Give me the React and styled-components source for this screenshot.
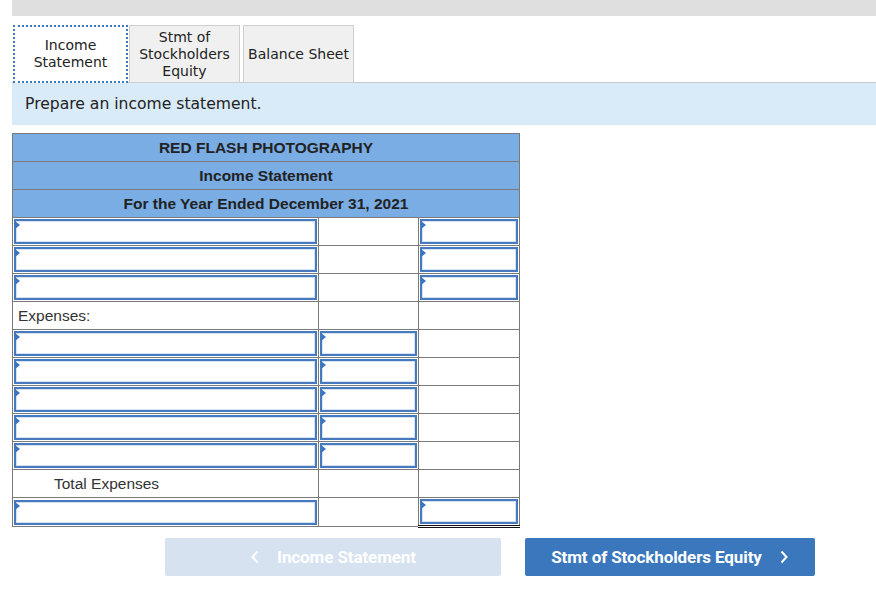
import React from 'react';
import styled, { createGlobalStyle } from 'styled-components';

const GlobalStyle = createGlobalStyle`
  body {
    margin: 0;
    background: #fff;
    font-family: "DejaVu Sans", Verdana, sans-serif;
  }
`;

const Page = styled.div`
  padding-left: 12px;
`;

const TopBar = styled.div`
  height: 16px;
  background: #dfdfdf;
`;

const Tabs = styled.div`
  display: flex;
  align-items: flex-end;
  margin-top: 9px;
  border-bottom: 1px solid #c8c8c8;
  padding-left: 1px;
`;

const Tab = styled.div`
  box-sizing: border-box;
  width: ${(p) => p.$w}px;
  height: 58px;
  margin-right: ${(p) => p.$mr || 0}px;
  margin-bottom: -1px;
  display: flex;
  align-items: center;
  justify-content: center;
  text-align: center;
  font-size: 14px;
  line-height: 17px;
  color: #222;
  background: ${(p) => (p.$active ? '#fff' : '#f0f0f0')};
  border: ${(p) => (p.$active ? '2px dotted #3a78c2' : '1px solid #cfcfcf')};
`;

const Banner = styled.div`
  height: 42px;
  background: #d9eaf8;
  display: flex;
  align-items: center;
  padding-left: 13px;
  font-size: 15.6px;
  color: #222;
`;

const Sheet = styled.table`
  margin-top: 8px;
  width: 507px;
  border-collapse: collapse;
  table-layout: fixed;
  font-family: "Liberation Sans", Arial, sans-serif;
  font-size: 15.5px;
  color: #333;
  tr {
    height: 28px;
  }
`;

const HeadCell = styled.th`
  padding: 0;
  background: #79ade4;
  border: 1px solid #7a7a7a;
  font-weight: bold;
  color: #222;
  text-align: center;
`;

const Cell = styled.td`
  padding: 1px;
  box-sizing: border-box;
  border: 1px solid #7a7a7a;
  border-top-color: ${(p) => (p.$rule ? '#111' : '#7a7a7a')};
  border-bottom: ${(p) => (p.$double ? '3px double #111' : '1px solid #7a7a7a')};
  vertical-align: middle;
`;

const Label = styled.span`
  display: block;
  padding-left: ${(p) => p.$indent || 4}px;
  line-height: 24px;
`;

const Field = styled.div`
  position: relative;
  box-sizing: border-box;
  height: 25px;
  border: 2px solid #4779be;
  box-shadow: inset 0 0 0 1px #d3e2f4;
  background: #fff;
  &::before {
    content: '';
    position: absolute;
    left: -1px;
    top: 0;
    border-left: 5px solid #3b74c0;
    border-top: 4px solid transparent;
    border-bottom: 4px solid transparent;
  }
`;

const Nav = styled.div`
  display: flex;
  gap: 24px;
  margin-top: 10px;
  padding-left: 153px;
`;

const NavButton = styled.button`
  box-sizing: border-box;
  width: ${(p) => p.$w}px;
  height: 38px;
  border: none;
  border-radius: 2px;
  display: flex;
  align-items: center;
  justify-content: center;
  gap: 17px;
  font-family: Roboto, "Liberation Sans", sans-serif;
  font-weight: 700;
  font-size: 17px;
  letter-spacing: -0.1px;
  color: #fff;
  background: ${(p) => (p.$disabled ? '#d6e2f0' : '#3a77bc')};
  padding: 0;
`;

const Chevron = ({ dir }) => (
  <svg width="10" height="14" viewBox="0 0 10 14" fill="none">
    <path
      d={dir === 'left' ? 'M7.5 1.5 L2.5 7 L7.5 12.5' : 'M2.5 1.5 L7.5 7 L2.5 12.5'}
      stroke="#fff"
      strokeWidth="2"
    />
  </svg>
);

// which columns hold an input: [name, amount1, amount2]
const rows = [
  { fields: [1, 0, 1] },
  { fields: [1, 0, 1] },
  { fields: [1, 0, 1] },
  { label: 'Expenses:' },
  { fields: [1, 1, 0] },
  { fields: [1, 1, 0] },
  { fields: [1, 1, 0] },
  { fields: [1, 1, 0] },
  { fields: [1, 1, 0] },
  { label: 'Total Expenses', indent: 40, rule: [0, 1, 0] },
  { fields: [1, 0, 1], rule: [0, 0, 1], double: [0, 0, 1] },
];

const App = () => {
  return (
    <Page>
      <GlobalStyle />
      <TopBar />
      <Tabs>
        <Tab $active $w={115} $mr={1}>Income<br />Statement</Tab>
        <Tab $w={111} $mr={3}>Stmt of<br />Stockholders<br />Equity</Tab>
        <Tab $w={111}>Balance Sheet</Tab>
      </Tabs>
      <Banner>Prepare an income statement.</Banner>
      <Sheet>
        <colgroup>
          <col style={{ width: 306 }} />
          <col style={{ width: 100 }} />
          <col style={{ width: 101 }} />
        </colgroup>
        <thead>
          <tr><HeadCell colSpan={3}>RED FLASH PHOTOGRAPHY</HeadCell></tr>
          <tr><HeadCell colSpan={3}>Income Statement</HeadCell></tr>
          <tr><HeadCell colSpan={3}>For the Year Ended December 31, 2021</HeadCell></tr>
        </thead>
        <tbody>
          {rows.map((row, i) => (
            <tr key={i}>
              {[0, 1, 2].map((c) => {
                const rule = row.rule && row.rule[c];
                const dbl = row.double && row.double[c];
                if (row.label && c === 0) {
                  return (
                    <Cell key={c}>
                      <Label $indent={row.indent}>{row.label}</Label>
                    </Cell>
                  );
                }
                return (
                  <Cell key={c} $rule={rule} $double={dbl}>
                    {row.fields && row.fields[c] ? <Field /> : null}
                  </Cell>
                );
              })}
            </tr>
          ))}
        </tbody>
      </Sheet>
      <Nav>
        <NavButton $disabled $w={336}>
          <Chevron dir="left" />
          Income Statement
        </NavButton>
        <NavButton $w={290}>
          Stmt of Stockholders Equity
          <Chevron dir="right" />
        </NavButton>
      </Nav>
    </Page>
  );
};

export default App;
